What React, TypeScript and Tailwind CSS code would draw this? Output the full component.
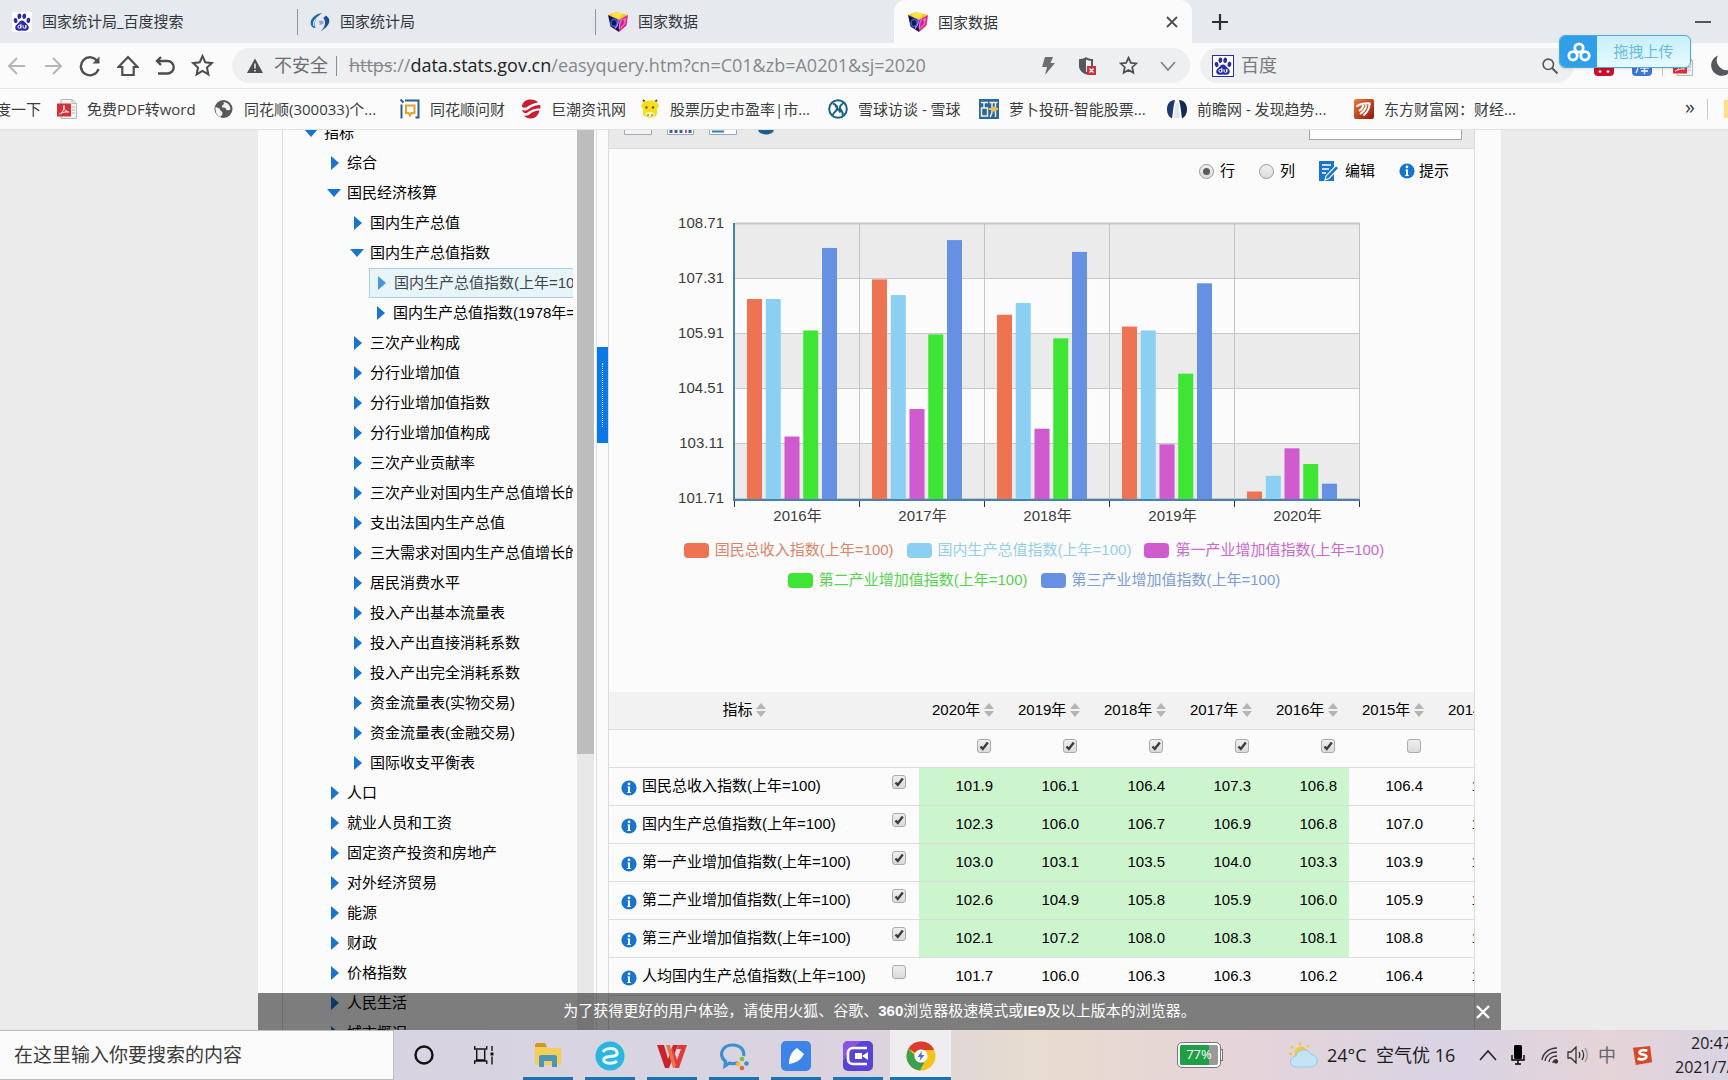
import { useState } from 'react';
import type { ReactNode } from 'react';
import clsx from 'clsx';

interface Indicator {
  name: string;
  values: number[];
}

interface TreeNode {
  label: string;
  level: number;
  open?: boolean;
  selected?: boolean;
}

const years = ['2020年', '2019年', '2018年', '2017年', '2016年', '2015年', '2014年'];

const indicators: Indicator[] = [
  { name: '国民总收入指数(上年=100)', values: [101.9, 106.1, 106.4, 107.3, 106.8, 106.4, 108.3] },
  { name: '国内生产总值指数(上年=100)', values: [102.3, 106.0, 106.7, 106.9, 106.8, 107.0, 107.4] },
  { name: '第一产业增加值指数(上年=100)', values: [103.0, 103.1, 103.5, 104.0, 103.3, 103.9, 104.1] },
  { name: '第二产业增加值指数(上年=100)', values: [102.6, 104.9, 105.8, 105.9, 106.0, 105.9, 107.2] },
  { name: '第三产业增加值指数(上年=100)', values: [102.1, 107.2, 108.0, 108.3, 108.1, 108.8, 108.3] },
  { name: '人均国内生产总值指数(上年=100)', values: [101.7, 106.0, 106.3, 106.3, 106.2, 106.4, 106.8] },
];

const colors = ['#ee7352', '#8bcff2', '#cf5bcf', '#3ee534', '#6690e1', '#f5a623'];
const legendText = [
  'text-[#dc8467]',
  'text-[#94cfe9]',
  'text-[#cb68cb]',
  'text-[#55d350]',
  'text-[#7c9cd6]',
  'text-[#f5a623]',
];

const tree: TreeNode[] = [
  { label: '指标', level: 0, open: true },
  { label: '综合', level: 1 },
  { label: '国民经济核算', level: 1, open: true },
  { label: '国内生产总值', level: 2 },
  { label: '国内生产总值指数', level: 2, open: true },
  { label: '国内生产总值指数(上年=100)', level: 3, selected: true },
  { label: '国内生产总值指数(1978年=100)', level: 3 },
  { label: '三次产业构成', level: 2 },
  { label: '分行业增加值', level: 2 },
  { label: '分行业增加值指数', level: 2 },
  { label: '分行业增加值构成', level: 2 },
  { label: '三次产业贡献率', level: 2 },
  { label: '三次产业对国内生产总值增长的拉动', level: 2 },
  { label: '支出法国内生产总值', level: 2 },
  { label: '三大需求对国内生产总值增长的贡献率和拉动', level: 2 },
  { label: '居民消费水平', level: 2 },
  { label: '投入产出基本流量表', level: 2 },
  { label: '投入产出直接消耗系数', level: 2 },
  { label: '投入产出完全消耗系数', level: 2 },
  { label: '资金流量表(实物交易)', level: 2 },
  { label: '资金流量表(金融交易)', level: 2 },
  { label: '国际收支平衡表', level: 2 },
  { label: '人口', level: 1 },
  { label: '就业人员和工资', level: 1 },
  { label: '固定资产投资和房地产', level: 1 },
  { label: '对外经济贸易', level: 1 },
  { label: '能源', level: 1 },
  { label: '财政', level: 1 },
  { label: '价格指数', level: 1 },
  { label: '人民生活', level: 1 },
  { label: '城市概况', level: 1 },
];

const levelPadding = ['pl-[21px]', 'pl-[44px]', 'pl-[67px]', 'pl-1'];

/* ---------- Iconos ---------- */

function BaiduIcon() {
  return (
    <svg viewBox="0 0 20 20" className="size-5 shrink-0 bg-white" aria-hidden="true">
      <g fill="#2a2ba3">
        <ellipse cx="3.6" cy="8.6" rx="1.9" ry="2.6" transform="rotate(-15 3.6 8.6)" />
        <ellipse cx="7.4" cy="4.2" rx="1.9" ry="2.8" />
        <ellipse cx="12.2" cy="4.2" rx="1.9" ry="2.8" transform="rotate(8 12.2 4.2)" />
        <ellipse cx="16.4" cy="8.4" rx="1.9" ry="2.6" transform="rotate(12 16.4 8.4)" />
        <path d="M10 8.4c1.8 0 2.6 1.4 3.7 2.7 1.2 1.4 3.3 2.4 3.1 4.7-.2 2-1.800 3-3.600 2.900-1.200 0-2-.3-3.200-.3s-2 .3-3.200.3c-1.800.1-3.500-.9-3.600-2.900-.1-2.300 1.900-3.300 3.100-4.700C7.400 9.800 8.200 8.400 10 8.400z" />
      </g>
      <g fill="none" stroke="#fff" strokeWidth="1">
        <circle cx="7.400" cy="14.800" r="1.500" />
        <path d="M8.900 11.800v4.600M11 13.200v2c0 1.500 2.800 1.500 2.800 0v-2M13.800 13.200v3.200" />
      </g>
    </svg>
  );
}

function StatsIcon() {
  return (
    <svg viewBox="0 0 20 20" className="size-5 shrink-0" aria-hidden="true">
      <path d="M12 1C5 2 .5 6.500.6 11.200c.1 3 2 4.600 5 4.800C3.200 12.500 5 6 12 1z" fill="#1f6fb5" />
      <path d="M8.500 4.500C4.500 7.500 3 10.500 3.600 13.500 3.200 10 5.200 7 8.500 4.500z" stroke="#dfe9f3" strokeWidth="1" fill="none" />
      <path d="M15.500 3.500c5.500 2.500 6 9-4.800 16 4.700-5 5.800-10 2.500-13.500.8-.4 1.700-1.200 2.300-2.500z" fill="#1c4f92" />
      <path d="M8.500 9.500c2.500-2 5-1 5.300.8-.3 1.800-2.500 3-4.800 2.200 1.200-.6 1-1.800-.5-3z" fill="#9a9bd0" />
    </svg>
  );
}

function DataIcon() {
  return (
    <svg viewBox="0 0 20 20" className="size-5 shrink-0" aria-hidden="true">
      <path d="M0 3 8 0l12 3-9 6z" fill="#f6c51e" />
      <path d="M4 2c3-2 9-2 11 1l-4 4-6-2z" fill="#ffe14a" />
      <path d="M0 3 11 8v12L2.500 14.500z" fill="#14154b" />
      <path d="M20 3 11 8v12l7.500-6.500z" fill="#d91f8d" />
      <path d="M14 7.500c3 0 3 5-1 7l-1 3 5-5 1.500-7z" fill="#f472b6" />
      <ellipse cx="6" cy="11" rx="3" ry="3.600" fill="none" stroke="#3558d0" strokeWidth="1.600" />
      <path d="M9 6.500c2 1 2 6-2 10M14 7c-2 3-3 7-2.500 10" fill="none" stroke="#b58aee" strokeWidth="1.200" />
    </svg>
  );
}

function PdfIcon() {
  return (
    <svg viewBox="0 0 20 20" className="size-5 shrink-0" aria-hidden="true">
      <path d="M4 .5h11l4.500 4V19.500H4z" fill="#f2f2f2" stroke="#b9b9b9" />
      <path d="M15 .5v4h4.500M15 8h3M15 11h3M15 14h3" fill="none" stroke="#b9b9b9" />
      <path d="M0 4.500h14v13H0z" fill="#d6313a" />
      <path d="M2.500 15c3-1 5.500-6 4.500-8.500-1.500 1 1 6 4.500 6.500-3-.5-6 .3-9 2z" fill="none" stroke="#fff" strokeWidth="1" />
    </svg>
  );
}

function GlobeIcon() {
  return (
    <svg viewBox="0 0 20 20" className="size-5 shrink-0" aria-hidden="true">
      <circle cx="9.500" cy="10" r="9" fill="#55585c" />
      <path d="M1.500 8c2.500 1 4 .5 4.500 2.500s2.500 1.500 2.500 4-2 1.500-2 3.500C3 17 1 13 1.500 8zM8 3c2 0 2.500 1.500 1.500 2.500S7.500 6.500 8 8s3.500 0 4 2 3 1 4.500.5c0-4-3-8-8.500-7.500z" fill="#f4f4f4" />
    </svg>
  );
}

function WencaiIcon() {
  return (
    <svg viewBox="0 0 20 20" className="size-5 shrink-0" aria-hidden="true">
      <path d="M1.500 5.500v14M5 1.500h13.500v17h-3M.5.5l3 3" fill="none" stroke="#2a5f8f" strokeWidth="2" />
      <path d="M6 6.500h8.500v7.500h-3l-1.500 2.500L8.500 14H6z" fill="none" stroke="#e4a32c" strokeWidth="2" />
    </svg>
  );
}

function CninfoIcon() {
  return (
    <svg viewBox="0 0 20 20" className="size-5 shrink-0" aria-hidden="true">
      <path d="M1 8C1 3 5 .5 9.500.5c3.500 0 6 1 7.500 3-5 .5-9 3-11 4.500-1.500 1-3.500 1-5 0z" fill="#c81e34" />
      <path d="M19 6c.5 1.500.5 2.500.3 3.500C14 9 9 11.500 6.500 13.500 4.500 15 2 14 .8 11c3 1 5 .5 7-1s6-4 11.200-4z" fill="#c81e34" />
      <path d="M18.500 11.500c-1 5-4.500 8-9 8-3 0-5-1-6.500-3 3 .5 4.500 0 6-1.500s5-3.500 9.500-3.500z" fill="#c81e34" />
    </svg>
  );
}

function BullIcon() {
  return (
    <svg viewBox="0 0 20 20" className="size-5 shrink-0" aria-hidden="true">
      <path d="M3 1l2 2M17 1l-2 2" stroke="#5b4a14" strokeWidth="2" />
      <path d="M3 3c4-2 10-2 14 0l2 4-2 3v5c-2 5-12 5-14 0v-5L1 7z" fill="#f4dd1f" />
      <circle cx="6.500" cy="8.500" r="1.200" fill="#6e5a10" />
      <circle cx="13" cy="8.500" r="1.200" fill="#6e5a10" />
      <path d="M5.500 14.500c2-2 7-2 9 0 0 4-9 4-9 0z" fill="#fff6b8" />
      <path d="M8 15v2M12 15v2" stroke="#6e5a10" strokeWidth="1" />
    </svg>
  );
}

function XueqiuIcon() {
  return (
    <svg viewBox="0 0 20 20" className="size-5 shrink-0" aria-hidden="true">
      <g fill="none" stroke="#1a6185" strokeWidth="2">
        <circle cx="10" cy="10" r="8.800" />
        <path d="M5 4.500c4.500 2 5 4 3.500 6.500S5 14 5 16M15.500 4c-4.500 3-4 5-2.500 7s2.500 3 1.500 5.500M7.500 6.500c2 4 3 3 5 7" />
      </g>
    </svg>
  );
}

function RoboIcon() {
  return (
    <svg viewBox="0 0 20 20" className="size-5 shrink-0" aria-hidden="true">
      <path d="M0 0h20v20H0z" fill="#2f6796" />
      <path d="M2 3.500h7M5 3.500v6M2.500 9h6v8h-6zM10.500 3.500h8M13 4v9c0 2-1 3-2 5M16.500 4v14" fill="none" stroke="#eef4f8" strokeWidth="1.400" />
      <path d="M10 10h9" stroke="#e8c24a" strokeWidth="2" />
      <circle cx="15" cy="10" r="2.600" fill="#e8c24a" />
    </svg>
  );
}

function QianzhanIcon() {
  return (
    <svg viewBox="0 0 20 20" className="size-5 shrink-0" aria-hidden="true">
      <path d="M8 1C3 1 0 5 0 10s2 8 5 9.500C6 14 6 8 8 1z" fill="#1d3a6e" />
      <path d="M12 1c5 0 8 4 8 9s-2 8-5 9.500C14 14 14 8 12 1z" fill="#142a55" />
      <path d="M8.500 4h3l1.500 15H7z" fill="#dfe5ee" />
    </svg>
  );
}

function EastmoneyIcon() {
  return (
    <svg viewBox="0 0 20 20" className="size-5 shrink-0" aria-hidden="true">
      <defs>
        <linearGradient id="east" x1="0" y1="0" x2="1" y2="1">
          <stop offset="0" stopColor="#ee7a3a" />
          <stop offset="1" stopColor="#8f160c" />
        </linearGradient>
      </defs>
      <rect width="20" height="20" rx="2" fill="url(#east)" />
      <g fill="none" stroke="#fff" strokeWidth="2">
        <path d="M2.500 7.500C7 4.500 11 4 16.500 4.500" />
        <path d="M15.500 5c0 4.500-2 8-6 11.500M12.500 5.500c-.5 3.500-2.500 7-6.500 9.500M9.500 6c-.5 2.500-2 4.500-4.500 6" />
      </g>
    </svg>
  );
}

function StarIcon({ className }: { className: string }) {
  return (
    <svg viewBox="0 0 22 22" className={className} aria-hidden="true">
      <path d="m11 2 2.700 6 6.300.700-4.700 4.300 1.300 6.500L11 16.200l-5.600 3.300L6.700 13 2 8.700 8.300 8z" fill="none" stroke="#4c4f52" strokeWidth="2" />
    </svg>
  );
}

function InfoIcon() {
  return (
    <svg viewBox="0 0 16 16" className="size-4 shrink-0" aria-hidden="true">
      <circle cx="8" cy="8" r="7.600" fill="#1874cd" />
      <path d="M8 6.500v6.500" stroke="#fff" strokeWidth="2" />
      <path d="M6.500 7H8M6.200 12.500h3.600" stroke="#fff" strokeWidth="1" />
      <circle cx="8" cy="3.900" r="1.300" fill="#fff" />
    </svg>
  );
}

/* ---------- Navegador ---------- */

const tabs: { title: string; icon: ReactNode }[] = [
  { title: '国家统计局_百度搜索', icon: <BaiduIcon /> },
  { title: '国家统计局', icon: <StatsIcon /> },
  { title: '国家数据', icon: <DataIcon /> },
];

function TabBar() {
  return (
    <div className="flex h-[43px] shrink-0 items-center bg-[#e6eaef] text-[15px] text-[#33363a]">
      {tabs.map((tab, i) => (
        <button
          key={tab.title}
          type="button"
          className={clsx(
            'flex h-[26px] w-[298px] shrink-0 items-center gap-2.5 pl-3 text-left',
            i < 2 && 'border-r border-[#8f959c]'
          )}
        >
          {tab.icon}
          {tab.title}
        </button>
      ))}
      <div className="flex h-full w-[298px] shrink-0 items-center justify-between rounded-t-xl bg-[#fbfbfb] pt-px pr-3.5 pl-3.5">
        <button type="button" className="flex items-center gap-2.5">
          <DataIcon />
          国家数据
        </button>
        <button type="button" aria-label="关闭标签页">
          <svg viewBox="0 0 12 12" className="size-3" aria-hidden="true">
            <path d="m1 1 10 10M11 1 1 11" stroke="#4a4d51" strokeWidth="1.800" />
          </svg>
        </button>
      </div>
      <button type="button" aria-label="新标签页" className="ml-5">
        <svg viewBox="0 0 16 16" className="size-4" aria-hidden="true">
          <path d="M8 0v16M0 8h16" stroke="#2d3033" strokeWidth="2.200" />
        </svg>
      </button>
      <button type="button" aria-label="最小化" className="mr-[17px] ml-auto">
        <svg viewBox="0 0 16 16" className="size-4" aria-hidden="true">
          <path d="M0 8h16" stroke="#2d3033" strokeWidth="1.600" />
        </svg>
      </button>
    </div>
  );
}

function AddressBar() {
  return (
    <div className="relative flex h-[46px] shrink-0 items-center border-b border-[#e3e4e6] bg-[#fbfbfb] text-[18px] text-[#6b6e72]">
      <div className="flex w-[232px] shrink-0 items-center gap-4 pl-[7px]">
        <button type="button" aria-label="后退">
          <svg viewBox="0 0 20 20" className="size-5" fill="none" stroke="#b4b6b8" strokeWidth="2" aria-hidden="true">
            <path d="M18 10H2M10 2l-8 8 8 8" />
          </svg>
        </button>
        <button type="button" aria-label="前进">
          <svg viewBox="0 0 20 20" className="size-5" fill="none" stroke="#b4b6b8" strokeWidth="2" aria-hidden="true">
            <path d="M2 10h16M10 2l8 8-8 8" />
          </svg>
        </button>
        <button type="button" aria-label="刷新">
          <svg viewBox="0 0 22 22" className="size-[22px]" fill="none" stroke="#4c4f52" strokeWidth="2.400" aria-hidden="true">
            <path d="M18.500 6.500A9 9 0 1 0 19.500 14" />
            <path d="M13.500 8.500h7V1.500z" fill="#4c4f52" stroke="none" />
          </svg>
        </button>
        <button type="button" aria-label="主页">
          <svg viewBox="0 0 22 22" className="size-[22px]" fill="none" stroke="#4c4f52" strokeWidth="2.200" aria-hidden="true">
            <path d="m1.500 12 9.500-10 9.500 10h-3.800v8H5.300v-8z" />
          </svg>
        </button>
        <button type="button" aria-label="撤销">
          <svg viewBox="0 0 20 20" className="size-5" fill="none" stroke="#4c4f52" strokeWidth="2.400" aria-hidden="true">
            <path d="M6 1 2 5l4 4M2 5h10.500a6.200 6.200 0 0 1 0 12.500H3" />
          </svg>
        </button>
        <button type="button" aria-label="收藏">
          <StarIcon className="size-[23px]" />
        </button>
      </div>
      <div className="mr-2.5 flex h-[35px] min-w-0 grow items-center rounded-full bg-[#eeeff1] pr-3.5 pl-[15px]">
        <svg viewBox="0 0 16 16" className="size-4 shrink-0" aria-hidden="true">
          <path d="M8 .5 16 15H0z" fill="#4c4f52" />
          <path d="M8 5.500v5M8 12v1.500" stroke="#fff" strokeWidth="1.400" />
        </svg>
        <span className="ml-[11px] shrink-0">不安全</span>
        <span className="mx-2 h-5 w-px shrink-0 bg-[#8a8d90]" />
        <span className="ml-1 whitespace-nowrap text-[#85888b]">
          <s>https</s>://<span className="text-[#222]">data.stats.gov.cn</span>/easyquery.htm?cn=C01&amp;zb=A0201&amp;sj=2020
        </span>
        <div className="ml-auto flex shrink-0 items-center gap-[22px]">
          <svg viewBox="0 0 14 20" className="h-5 w-3.5" aria-hidden="true">
            <path d="M4 1h8L9.500 7H14L4 19l2-8H1z" fill="#6b6e72" />
          </svg>
          <svg viewBox="0 0 20 20" className="size-5" aria-hidden="true">
            <path d="M9 1c2 1.500 4 2 7 2v7c0 4-3 6.500-7 8.500C5 16.500 2 14 2 10V3c3 0 5-.5 7-2z" fill="#55585c" />
            <path d="M9 3.500c1.500 1 3 1.300 5 1.300v5c0 3-2 5-5 6.500z" fill="#f1f2f3" />
            <path d="M10 10h9v9h-9z" fill="#c9323a" />
            <path d="m12.500 12.500 4 4m0-4-4 4" stroke="#fff" strokeWidth="1.200" />
          </svg>
          <StarIcon className="size-[19px]" />
          <svg viewBox="0 0 16 16" className="size-4" aria-hidden="true">
            <path d="m1 4 7 8 7-8" fill="none" stroke="#7c7f82" strokeWidth="1.600" />
          </svg>
        </div>
      </div>
      <form className="flex h-[35px] w-[374px] shrink-0 items-center gap-[7px] rounded-full bg-[#eeeff1] pr-4 pl-3">
        <span className="flex border border-[#2a2ba3]">
          <BaiduIcon />
        </span>
        <input aria-label="搜索" placeholder="百度" className="min-w-0 grow bg-transparent outline-none placeholder:text-[#77797c]" />
        <svg viewBox="0 0 16 16" className="size-4" aria-hidden="true">
          <circle cx="6.300" cy="6.300" r="5.200" fill="none" stroke="#55585c" strokeWidth="1.600" />
          <path d="m10 10 5.500 5.500" stroke="#55585c" strokeWidth="2" />
        </svg>
      </form>
      <div className="flex w-[154px] shrink-0 items-center overflow-hidden pl-5">
        <svg viewBox="0 0 20 20" className="size-5 shrink-0" aria-hidden="true">
          <rect width="20" height="20" rx="4" fill="#c8102e" />
          <path d="M6 5v7M14 5v7M6 14.500v2M14 14.500v2" stroke="#fff" strokeWidth="2.500" fill="none" />
        </svg>
        <svg viewBox="0 0 20 20" className="ml-[18px] size-5 shrink-0" aria-hidden="true">
          <rect width="20" height="20" rx="4" fill="#3b77d6" />
          <path d="M4 4l1.500 2M3 9h3M4 17l2-5M9 4h7l-6 6M16 8v2M8 12h9M9 15h7M12.500 9v9" stroke="#fff" strokeWidth="1.300" fill="none" />
        </svg>
        <span className="mx-2.5 h-5 w-px shrink-0 bg-[#c8cacc]" />
        <PdfIcon />
        <svg viewBox="0 0 24 24" className="ml-4 size-6 shrink-0" aria-hidden="true">
          <path d="M9 1.500A10.500 10.500 0 1 0 22.500 15 10 10 0 0 1 9 1.500z" fill="#55585c" />
        </svg>
      </div>
      <button
        type="button"
        className="absolute -top-2 right-[37px] flex h-[33px] w-[132px] overflow-hidden rounded-md border border-[#4fa9d3] bg-gradient-to-b from-[#c8effb] to-[#e6faff] text-[15px] text-[#6bbcdc] shadow-sm"
      >
        <span className="flex h-full w-[37px] items-center justify-center bg-[#2f9fe8]">
          <svg viewBox="0 0 24 20" className="h-5 w-6" fill="none" stroke="#fff" strokeWidth="2.800" aria-hidden="true">
            <circle cx="12" cy="6" r="4.200" />
            <circle cx="6" cy="13.800" r="4.200" />
            <circle cx="18" cy="13.800" r="4.200" />
          </svg>
        </span>
        <span className="grow self-center">拖拽上传</span>
      </button>
    </div>
  );
}

const bookmarks: { title: string; icon: ReactNode }[] = [
  { title: '免费PDF转word', icon: <PdfIcon /> },
  { title: '同花顺(300033)个...', icon: <GlobeIcon /> },
  { title: '同花顺问财', icon: <WencaiIcon /> },
  { title: '巨潮资讯网', icon: <CninfoIcon /> },
  { title: '股票历史市盈率|市...', icon: <BullIcon /> },
  { title: '雪球访谈 - 雪球', icon: <XueqiuIcon /> },
  { title: '萝卜投研-智能股票...', icon: <RoboIcon /> },
  { title: '前瞻网 - 发现趋势...', icon: <QianzhanIcon /> },
  { title: '东方财富网：财经...', icon: <EastmoneyIcon /> },
];

function Bookmarks() {
  return (
    <nav className="flex h-[41px] shrink-0 items-center border-b border-[#dedfe0] bg-[#fbfbfb] text-[15px] text-[#3a3d40]">
      <div className="grid grow grid-cols-[57px_157px_186px_121px_119px_188px_151px_188px_187px_1fr] items-center whitespace-nowrap">
        <a href="#" className="flex w-[41px] justify-end overflow-hidden">度一下</a>
        {bookmarks.map((b) => (
          <a key={b.title} href="#" className="flex items-center gap-2.5">
            {b.icon}
            {b.title}
          </a>
        ))}
      </div>
      <button type="button" className="pb-1 text-xl">»</button>
      <span className="mr-4 ml-3 h-5 w-px bg-[#c8cacc]" />
      <span className="h-[18px] w-1 bg-[#fbe08a]" />
    </nav>
  );
}

/* ---------- Página ---------- */

function Check({ label, checked, onChange }: { label: string; checked: boolean; onChange: () => void }) {
  return (
    <span className="relative inline-block size-3.5 align-top">
      <input
        type="checkbox"
        aria-label={label}
        checked={checked}
        onChange={onChange}
        className="peer block size-3.5 appearance-none rounded-[3px] border border-[#ababab] bg-gradient-to-b from-[#efefef] to-[#dadada]"
      />
      <svg viewBox="0 0 14 14" className="pointer-events-none absolute inset-0 hidden size-3.5 peer-checked:block" aria-hidden="true">
        <path d="m3.500 7.500 2.300 2.500 5-6.500" fill="none" stroke="#3c3c3c" strokeWidth="2.400" />
      </svg>
    </span>
  );
}

function SortIcon() {
  return (
    <svg viewBox="0 0 10 14" className="h-3.5 w-2.5" aria-hidden="true">
      <path d="M5 0 10 6H0zM5 14 0 8h10z" fill="#b5b5b5" />
    </svg>
  );
}

function Tree() {
  return (
    <aside className="w-[291px] shrink-0 overflow-hidden border-l border-[#dcdcdc]">
      <ul className="-mt-3">
        {tree.map((node) => (
          <li key={node.label} className={clsx('flex', node.level === 3 && 'pl-[86px]')}>
            <button
              type="button"
              className={clsx(
                'flex h-[30px] grow items-center whitespace-nowrap text-left text-[15px]',
                levelPadding[node.level],
                node.selected ? 'border border-r-0 border-[#a9d2e0] bg-[#e7f5fb] text-[#3f464a]' : 'text-black'
              )}
            >
              <svg viewBox="0 0 20 14" className="h-3.5 w-5 shrink-0" aria-hidden="true">
                {node.open ? (
                  <path d="M0 3h14L7 11z" fill="#1874cd" />
                ) : (
                  <path d="M4 0v14l8-7z" fill={node.selected ? '#4d94de' : '#1874cd'} />
                )}
              </svg>
              {node.label}
            </button>
          </li>
        ))}
      </ul>
    </aside>
  );
}

const PLOT_X = 126;
const PLOT_Y = 30;
const BAND = 55;
const STEP = 125;
const MIN = 101.71;

function Chart({ rows, cols }: { rows: number[]; cols: number[] }) {
  const labels = ['108.71', '107.31', '105.91', '104.51', '103.11', '101.71'];
  const bottom = PLOT_Y + BAND * 5 + 1;
  // los años van de izquierda a derecha
  const shown = [...cols].reverse();
  const width = STEP * shown.length;

  return (
    <svg width="865" height="337" className="block max-w-none shrink-0 text-[15px]" fill="#3c3c3c" role="img" aria-label="指数柱状图">
      {[0, 2, 4].map((i) => (
        <rect key={i} x={PLOT_X} y={PLOT_Y + i * BAND} width={width} height={BAND} fill="#ebebeb" />
      ))}
      {labels.map((l, i) => (
        <g key={l}>
          <path d={`M${PLOT_X} ${PLOT_Y + i * BAND + 0.5}h${width}`} stroke="#c8c8c8" strokeWidth={i === 0 ? 2 : 1} />
          <text x="115" y={PLOT_Y + i * BAND + 5} textAnchor="end">{l}</text>
        </g>
      ))}
      {shown.map((c, i) => (
        <g key={c}>
          <path d={`M${PLOT_X + (i + 1) * STEP - 0.5} ${PLOT_Y}V${bottom}`} stroke="#c4c4c4" />
          {rows.map((r, k) => {
            const h = ((indicators[r].values[c] - MIN) / 7) * 275;
            return <rect key={r} x={PLOT_X + i * STEP + 12 + k * 18.75} y={bottom - h} width="15" height={h} fill={colors[r]} />;
          })}
          <path d={`M${PLOT_X + (i + 1) * STEP - 0.5} ${bottom}v8`} stroke="#333" />
          <text x={PLOT_X + i * STEP + STEP / 2} y={bottom + 22} textAnchor="middle">{years[c]}</text>
        </g>
      ))}
      <path d={`M${PLOT_X - 0.5} ${bottom}v8`} stroke="#333" />
      <path d={`M${PLOT_X - 1} ${PLOT_Y}V${bottom + 1}H${PLOT_X + width}`} fill="none" stroke="#4682ac" strokeWidth="2" />
    </svg>
  );
}

export default function App() {
  const [axis, setAxis] = useState('row');
  const [cols, setCols] = useState<number[]>([0, 1, 2, 3, 4]);
  const [rows, setRows] = useState<number[]>([0, 1, 2, 3, 4]);
  const [notice, setNotice] = useState(true);

  const toggle = (list: number[], i: number) =>
    list.includes(i) ? list.filter((n) => n !== i) : [...list, i].sort((a, b) => a - b);

  return (
    <div className="flex h-screen flex-col overflow-hidden bg-[#ebebeb] font-['Open_Sans','Noto_Sans_CJK_SC',sans-serif]">
      <TabBar />
      <AddressBar />
      <Bookmarks />

      <main className="relative mr-[227px] ml-[258px] flex min-h-0 grow bg-[#fbfbfb] pl-6 font-['Liberation_Sans','Noto_Sans_CJK_SC',sans-serif] text-[15px] text-black">
        <Tree />
        <div className="ml-1 w-[17px] shrink-0 bg-[#e8e8e8]">
          <div className="h-[624px] bg-[#bdbdbd]" />
        </div>
        <div className="ml-0.5 w-3 shrink-0 border-l border-[#e0e0e0] pt-[217px]">
          <button type="button" aria-label="收起目录" className="flex h-24 w-full items-center justify-center bg-[#0b78e8]">
            <span className="h-16 border-l border-dotted border-white" />
          </button>
        </div>

        <section className="mr-[26px] flex min-w-0 grow flex-col overflow-hidden border-x border-[#dcdcdc]">
          <div className="flex h-[19px] shrink-0 items-start border-b border-[#dcdcdc] bg-[#e9e9e9] pr-3 pl-[15px]">
            <svg width="160" height="5" aria-hidden="true">
              <path d="M.5 0v4.500h27V0" fill="#f3f3f3" stroke="#a9abb5" />
              <path d="M43.500 0v4.500h26V0" fill="#fff" stroke="#8fa6c4" />
              <path d="M47 0v3M52 0v3M57 0v3M66 0v3" stroke="#3e5f95" strokeWidth="3" />
              <path d="M62 0v3" stroke="#b0558a" strokeWidth="2" />
              <path d="M85.500 0v4.500h27V0" fill="#fff" stroke="#8fa6c4" />
              <path d="M88 1.500h12" stroke="#2f7fb5" strokeWidth="2" />
              <path d="M134 0h16c-2 6-14 6-16 0z" fill="#1f5f8f" />
            </svg>
            <input aria-label="搜索数据" className="ml-auto h-2.5 w-[153px] border border-t-0 border-[#a5a5a5] bg-white" />
          </div>

          <div className="flex h-11 shrink-0 items-center justify-end gap-6 pr-[25px]">
            {[
              { id: 'row', label: '行' },
              { id: 'col', label: '列' },
            ].map((o) => (
              <label key={o.id} className="flex items-center gap-1.5">
                <span className="relative flex size-[15px]">
                  <input
                    type="radio"
                    name="axis"
                    checked={axis === o.id}
                    onChange={() => setAxis(o.id)}
                    className="peer size-[15px] appearance-none rounded-full border border-[#9a9a9a] bg-gradient-to-b from-[#f0f0f0] to-[#dcdcdc]"
                  />
                  <span className="pointer-events-none absolute inset-1 hidden rounded-full bg-[#5a5a5a] peer-checked:block" />
                </span>
                {o.label}
              </label>
            ))}
            <button type="button" className="flex items-center gap-1.5">
              <svg viewBox="0 0 20 20" className="size-5" aria-hidden="true">
                <path d="M0 0h15v20H0z" fill="#1874cd" />
                <path d="M3 4h9M3 8h7M3 12h4" stroke="#fff" strokeWidth="1.500" />
                <path d="M17 4.500 20 7 10 17.500 6 19l1-4z" fill="#1874cd" stroke="#fbfbfb" strokeWidth="1.200" />
              </svg>
              编辑
            </button>
            <button type="button" className="flex items-center gap-1">
              <InfoIcon />
              提示
            </button>
          </div>

          <div className="flex h-[499px] shrink-0 flex-col">
            <Chart rows={rows} cols={cols} />
            <div className="flex w-[850px] flex-wrap justify-center gap-x-[13px] px-16 pt-[5px]">
              {rows.map((r) => (
                <span key={r} className={clsx('flex h-[30px] items-center gap-1.5', legendText[r])}>
                  <span className="h-[15px] w-[25px] rounded" style={{ backgroundColor: colors[r] }} />
                  {indicators[r].name}
                </span>
              ))}
            </div>
          </div>

          <table className="w-[912px] shrink-0 table-fixed border-collapse">
            <colgroup>
              <col className="w-[270px]" />
              <col className="w-10" />
              {years.map((y) => (
                <col key={y} className="w-[86px]" />
              ))}
            </colgroup>
            <thead>
              <tr className="h-[37px] border-b border-[#dcdcdc] bg-[#f2f2f2]">
                <th className="font-normal">
                  <button type="button" className="inline-flex items-center gap-[3px]">
                    指标
                    <SortIcon />
                  </button>
                </th>
                <th />
                {years.map((y) => (
                  <th key={y} className="p-0 pl-[13px] text-left font-normal">
                    <button type="button" className="inline-flex items-center gap-1 whitespace-nowrap">
                      {y}
                      <SortIcon />
                    </button>
                  </th>
                ))}
              </tr>
            </thead>
            <tbody>
              <tr className="h-[38px] border-b border-[#dcdcdc]">
                <td />
                <td />
                {years.map((y, i) => (
                  <td key={y} className="p-0 pt-1 pr-3.5 text-right">
                    <Check label={y} checked={cols.includes(i)} onChange={() => setCols(toggle(cols, i))} />
                  </td>
                ))}
              </tr>
              {indicators.map((ind, r) => (
                <tr key={ind.name} className="h-[38px] border-b border-[#dcdcdc]">
                  <td className="p-0 pl-3">
                    <div className="flex items-center gap-[5px] whitespace-nowrap">
                      <span className="pt-1">
                        <InfoIcon />
                      </span>
                      {ind.name}
                    </div>
                  </td>
                  <td className="p-0 text-center">
                    <Check label={ind.name} checked={rows.includes(r)} onChange={() => setRows(toggle(rows, r))} />
                  </td>
                  {ind.values.map((v, i) => (
                    <td
                      key={years[i]}
                      className={clsx('p-0 pr-3 text-right', rows.includes(r) && cols.includes(i) && 'bg-[#cdf5cd]')}
                    >
                      {v.toFixed(1)}
                    </td>
                  ))}
                </tr>
              ))}
            </tbody>
          </table>
        </section>

        {notice && (
          <div className="absolute inset-x-0 bottom-0 flex h-[37px] items-center justify-center bg-black/50 text-white">
            <p>
              为了获得更好的用户体验，请使用火狐、谷歌、<b>360</b>浏览器极速模式或<b>IE9</b>及以上版本的浏览器。
            </p>
            <button type="button" aria-label="关闭" onClick={() => setNotice(false)} className="absolute right-[11px]">
              <svg viewBox="0 0 14 14" className="size-3.5" aria-hidden="true">
                <path d="m1 1 12 12M13 1 1 13" stroke="#fff" strokeWidth="2.400" />
              </svg>
            </button>
          </div>
        )}
      </main>

      <Taskbar />
    </div>
  );
}

/* ---------- Barra de tareas ---------- */

const apps: { name: string; icon: ReactNode }[] = [
  {
    name: '文件资源管理器',
    icon: (
      <>
        <path d="M2 5h10l2 2h14v17H2z" fill="#f4cf58" />
        <path d="M2 4c0-1 1-2 2-2h8l2 4H2z" fill="#c9972b" />
        <path d="M6 26V16c0-1 1-2 2-2h14c1 0 2 1 2 2v10h-5v-6h-8v6z" fill="#4d94b5" />
      </>
    ),
  },
  {
    name: '浏览器',
    icon: (
      <>
        <circle cx="15" cy="15" r="14.500" fill="#2bb5e0" />
        <path d="M8 11c2-4 12-5 14 0 1 4-3 4-7 4.500s-7 1-6 4.500c2 3 10 3 13 0" fill="none" stroke="#e8fbff" strokeWidth="3" />
      </>
    ),
  },
  {
    name: 'WPS',
    icon: (
      <>
        <path d="M0 4h7l4 14 5-14h5l-9 23H8z" fill="#c9242b" />
        <path d="M13 10l5 17h4L30 4h-9l-1 4h4l-4 11-4-12z" fill="#e23b35" />
        <path d="M9 4h4l6 20-2 3h-1z" fill="#f0714e" />
      </>
    ),
  },
  {
    name: '企业微信',
    icon: (
      <>
        <path d="M19 21.500c-3 1.500-6 1.500-8.500.5L6 25l.500-4.500C-1 14 3 4 13.500 4 21 4 26 9 24.500 15" fill="none" stroke="#3d8fd1" strokeWidth="3.200" />
        <circle cx="23" cy="18" r="2.300" fill="#76c043" />
        <circle cx="27.500" cy="22.500" r="2.300" fill="#3d8fd1" />
        <circle cx="23" cy="27" r="2.300" fill="#e2633c" />
        <circle cx="19" cy="23" r="2.300" fill="#f5b92f" />
      </>
    ),
  },
  {
    name: '便笺',
    icon: (
      <>
        <rect width="30" height="30" rx="5" fill="#3d84e8" />
        <path d="M8 23c0-7 2-12 8-16l7 6c-3 6-8 9-15 10z" fill="#fff" />
      </>
    ),
  },
  {
    name: '录屏',
    icon: (
      <>
        <rect width="30" height="30" rx="5" fill="#5744d6" />
        <path d="M0 5a5 5 0 0 1 5-5h14C12 4 4 14 0 20z" fill="#8a54e6" />
        <path d="M24 7H10c-3 0-5 2-5 5v6c0 3 2 5 5 5h14" fill="none" stroke="#fff" strokeWidth="2.600" />
        <path d="M12 12h7v6h-7zM19 15l6-4v8z" fill="#fff" />
      </>
    ),
  },
  {
    name: '极速浏览器',
    icon: (
      <>
        <circle cx="15" cy="15" r="14.500" fill="#f2c318" />
        <path d="M15 15 2.400 7.800A14.500 14.500 0 0 1 27.600 7.800L28 9H15z" fill="#da3b32" />
        <path d="M2.400 7.800A14.500 14.500 0 0 0 14 29.500L20 18l-9-1z" fill="#3ba14c" />
        <circle cx="15" cy="15" r="6.600" fill="#fff" />
        <path d="M16 10l-4.500 6h3L13.500 20l5-6h-3z" fill="#4a6fd0" />
      </>
    ),
  },
];

function Taskbar() {
  return (
    <footer className="flex h-[50px] shrink-0 items-center overflow-hidden bg-[linear-gradient(90deg,#d6d2e0_0%,#d9d4e2_40%,#dbd3de_50%,#e7dccf_60%,#e6d5d8_70%,#d9d3e4_84%,#e5d4d8_93%,#d9d3e3_100%)] text-[#1c1c1c]">
      <input
        aria-label="搜索"
        placeholder="在这里输入你要搜索的内容"
        className="h-full w-[394px] shrink-0 border border-l-0 border-[#bcbcbc] bg-[#fbfbfb] pl-3.5 text-[19px] outline-none placeholder:text-[#3c3c3c]"
      />
      <button type="button" aria-label="小娜" className="ml-5">
        <svg viewBox="0 0 20 20" className="size-5" aria-hidden="true">
          <circle cx="10" cy="10" r="8.500" fill="none" stroke="#111" strokeWidth="2.400" />
        </svg>
      </button>
      <button type="button" aria-label="任务视图" className="ml-10">
        <svg viewBox="0 0 20 20" className="size-5" fill="none" stroke="#111" strokeWidth="1.400" aria-hidden="true">
          <path d="M.7 1v3h12V1M2.700 5v10h8V5M.7 19v-3h12v3M18 1v5M18 11.500v8" />
          <path d="M16.500 9h3" strokeWidth="3" />
        </svg>
      </button>
      <div className="ml-[29px] flex h-full items-stretch">
        {apps.map((app, i) => (
          <button
            key={app.name}
            type="button"
            aria-label={app.name}
            className={clsx(
              'flex items-center justify-center border-b-[3px] border-[#1b72b5]',
              i === apps.length - 1 ? 'w-[61px] bg-[#f0edf1]' : 'w-[50px]',
              i < apps.length - 2 && 'mr-3',
              i === apps.length - 2 && 'mr-[7px]'
            )}
          >
            <svg viewBox="0 0 30 30" className="mt-1 size-[30px]" aria-hidden="true">
              {app.icon}
            </svg>
          </button>
        ))}
      </div>

      <div className="ml-auto flex h-full shrink-0 items-center">
        <div className="flex items-center">
          <span className="relative flex h-6 w-[42px] items-center justify-center overflow-hidden rounded-sm border-2 border-white bg-[#999] text-[13px] text-white outline outline-[#777]">
            <span className="absolute inset-y-0 left-0 w-[77%] bg-[#1e9e45]" />
            <span className="relative">77%</span>
          </span>
          <span className="h-3 w-[3px] border border-[#777] bg-white" />
        </div>
        <svg viewBox="0 0 30 26" className="ml-[66px] h-[26px] w-[30px]" aria-hidden="true">
          <circle cx="12" cy="11" r="6.500" fill="#f3c73c" />
          <path d="M11 0v3M2 4l2 2M0 12h3M20 3l-2 2" stroke="#f3c73c" strokeWidth="2" />
          <path d="M7 25a5.500 5.500 0 0 1 0-11 8 8 0 0 1 15-1.500A6.300 6.300 0 0 1 23 25z" fill="#c3e4f4" stroke="#98c8e4" />
        </svg>
        <span className="ml-2 w-[140px] shrink-0 whitespace-pre text-lg">24°C  空气优 16</span>
        <svg viewBox="0 0 18 12" className="ml-3 h-3 w-[18px]" aria-hidden="true">
          <path d="m1 11 8-9 8 9" fill="none" stroke="#222" strokeWidth="1.500" />
        </svg>
        <svg viewBox="0 0 14 20" className="ml-3.5 h-5 w-3.5" aria-hidden="true">
          <rect x="3" width="8" height="14" rx="1.500" fill="#000" />
          <path d="M1 10v5h12v-5M7 15v4M4 19h6" fill="none" stroke="#000" strokeWidth="1.400" />
        </svg>
        <svg viewBox="0 0 18 18" className="ml-4 size-[18px]" fill="none" stroke="#333" strokeWidth="1.300" aria-hidden="true">
          <path d="M1 14C2 7 8 2 16 2M4 15C5 9 10 6 16 6M8 16c0-4 4-6 8-6M12 17c0-2 2-3 4-3" />
          <circle cx="15" cy="15.500" r="1.500" fill="#333" />
        </svg>
        <svg viewBox="0 0 22 18" className="ml-2 h-[18px] w-[22px]" fill="none" stroke="#333" strokeWidth="1.300" aria-hidden="true">
          <path d="M1 6h3l5-5v16l-5-5H1zM12 6c1 2 1 4 0 6M15 4c2 3 2 7 0 10" />
          <path d="M18 2c3 4 3 10 0 14" stroke="#999" />
        </svg>
        <span className="ml-[9px] text-[18px] text-[#666]">中</span>
        <svg viewBox="0 0 22 22" className="ml-4 size-[21px]" aria-hidden="true">
          <path d="m1 3 18-2 2 17-17 3z" fill="#d6492a" />
          <path d="M16 6c-3-1-8-1-8 2s7 1 7 4-6 4-9 2" fill="none" stroke="#fff" strokeWidth="2.800" />
        </svg>
        <div className="ml-[22px] w-[53px] overflow-hidden text-base leading-6 whitespace-nowrap">
          <p className="pl-4">20:47</p>
          <p>2021/7/</p>
        </div>
      </div>
    </footer>
  );
}
